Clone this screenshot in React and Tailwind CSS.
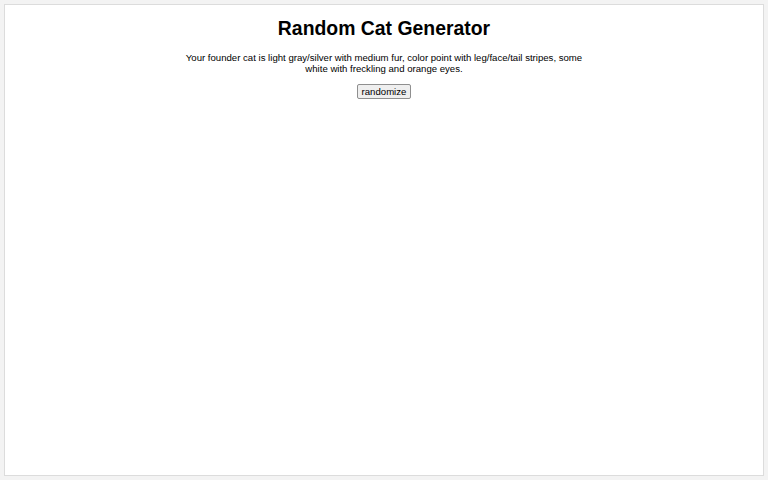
import React, { useState } from 'react';

const FURS = ['short', 'medium', 'long'];
const COLORS = ['light gray/silver', 'black', 'orange', 'cream', 'brown'];
const EYES = ['orange', 'green', 'blue', 'copper'];

function App() {
  const [cat, setCat] = useState({ color: 'light gray/silver', fur: 'medium', eyes: 'orange' });

  const randomize = () => {
    const pick = (list) => list[Math.floor(Math.random() * list.length)];
    setCat({ color: pick(COLORS), fur: pick(FURS), eyes: pick(EYES) });
  };

  const description = `Your founder cat is ${cat.color} with ${cat.fur} fur, color point with leg/face/tail stripes, some white with freckling and ${cat.eyes} eyes.`;

  return (
    <div className="h-[480px] bg-[#f3f3f3] p-[4px] font-['Liberation_Sans',Arial,sans-serif] text-black">
      <div className="h-full border border-[#dcdcdc] bg-white flex flex-col items-center">
        <h1 className="mt-[11px] text-[19.4px] leading-[24px] font-bold">Random Cat Generator</h1>
        <p className="mt-[12px] w-[410px] text-center text-[9.6px] leading-[11px]">{description}</p>
        <button
          onClick={randomize}
          className="mt-[10px] h-[15px] px-[4px] text-[9.6px] leading-[12px] bg-[#efefef] border border-[#8f8f8f] rounded-[2px]"
        >
          randomize
        </button>
      </div>
    </div>
  );
}

export default App;
